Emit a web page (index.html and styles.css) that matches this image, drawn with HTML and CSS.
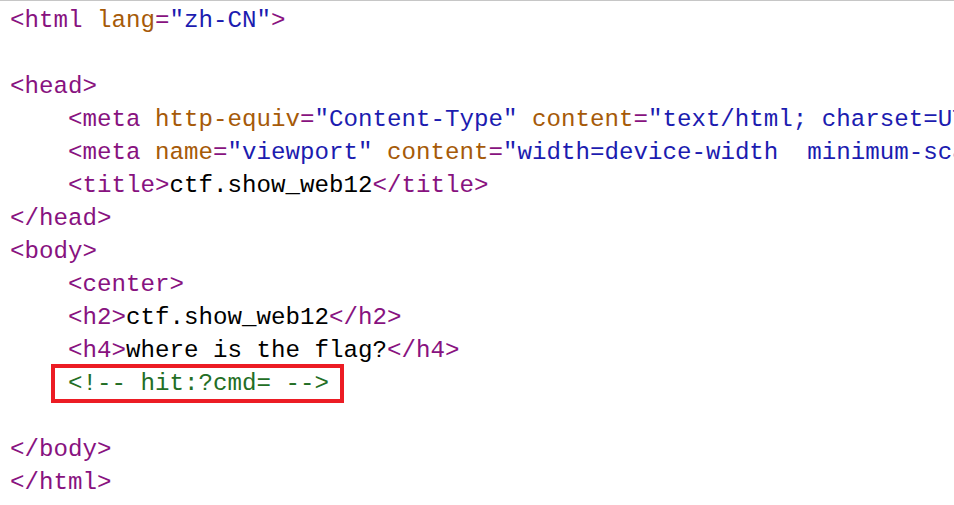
FILE: index.html
```html
<!DOCTYPE html>
<html lang="zh-CN">
<head>
    <meta charset="UTF-8">
    <meta name="viewport" content="width=device-width, initial-scale=1.0">
    <title>ctf.show_web12 源码</title>
    <link rel="stylesheet" href="styles.css">
</head>
<body>
    <div class="source">
<div class="line"><span class="tag">&lt;html </span><span class="attr">lang</span><span class="tag">=</span><span class="val">"zh-CN"</span><span class="tag">&gt;</span></div>
<div class="line"> </div>
<div class="line"><span class="tag">&lt;head&gt;</span></div>
<div class="line">    <span class="tag">&lt;meta </span><span class="attr">http-equiv</span><span class="tag">=</span><span class="val">"Content-Type"</span> <span class="attr">content</span><span class="tag">=</span><span class="val">"text/html; charset=UTF-8"</span><span class="tag">&gt;</span></div>
<div class="line">    <span class="tag">&lt;meta </span><span class="attr">name</span><span class="tag">=</span><span class="val">"viewport"</span> <span class="attr">content</span><span class="tag">=</span><span class="val">"width=device-width  minimum-scale=1.0"</span><span class="tag">&gt;</span></div>
<div class="line">    <span class="tag">&lt;title&gt;</span>ctf.show_web12<span class="tag">&lt;/title&gt;</span></div>
<div class="line"><span class="tag">&lt;/head&gt;</span></div>
<div class="line"><span class="tag">&lt;body&gt;</span></div>
<div class="line">    <span class="tag">&lt;center&gt;</span></div>
<div class="line">    <span class="tag">&lt;h2&gt;</span>ctf.show_web12<span class="tag">&lt;/h2&gt;</span></div>
<div class="line">    <span class="tag">&lt;h4&gt;</span>where is the flag?<span class="tag">&lt;/h4&gt;</span></div>
<div class="line">    <span class="comment mark">&lt;!-- hit:?cmd= --&gt;</span></div>
<div class="line"> </div>
<div class="line"><span class="tag">&lt;/body&gt;</span></div>
<div class="line"><span class="tag">&lt;/html&gt;</span></div>
    </div>
</body>
</html>
```
FILE: styles.css
```css
html, body { margin: 0; padding: 0; background: #fff; }
body { border-top: 1px solid #c6c6c6; overflow: hidden; height: 504px; }
.source { font-family: "Liberation Mono", "DejaVu Sans Mono", "Noto Sans CJK SC", monospace; font-size: 24.17px; line-height: 33px; padding: 3px 0 0 10px; color: #000; }
.line { white-space: pre; height: 33px; }
.tag { color: #881280; }
.attr { color: #a65a08; }
.val { color: #1c1cb0; }
.comment { color: #236e25; }
.mark { position: relative; }
.mark::after { content: ""; position: absolute; left: -17px; right: -15px; top: -6px; bottom: -6px; border: 4px solid #ec1c24; }
```
